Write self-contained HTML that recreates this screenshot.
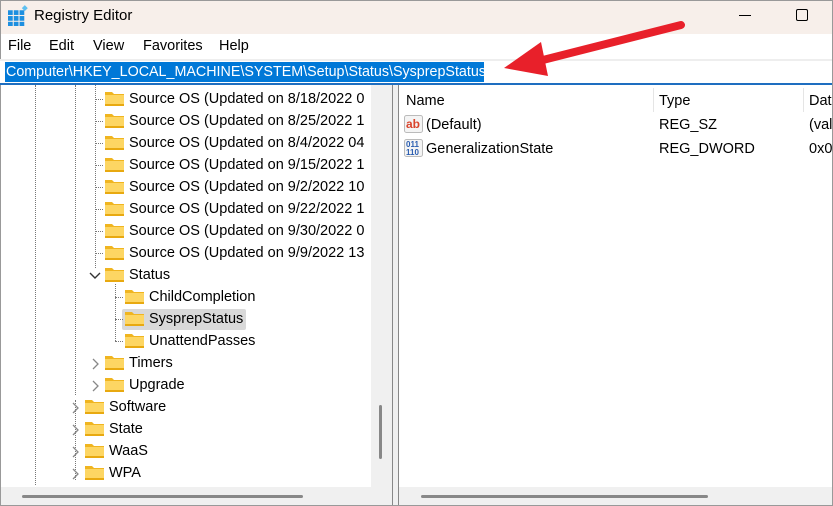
<!DOCTYPE html>
<html><head><style>
*{margin:0;padding:0;box-sizing:border-box}
body{width:833px;height:506px;overflow:hidden;background:#fff;font-family:"Liberation Sans",sans-serif;font-size:14.5px;color:#000;position:relative}
.a{position:absolute}
.t{position:absolute;white-space:nowrap;line-height:22px}
.fold{position:absolute;width:19px;height:15px}
.dv{position:absolute;border-left:1px dotted #777;width:0}
.dh{position:absolute;border-top:1px dotted #777;height:0}
</style></head><body>
<!-- title -->
<div class="a" style="left:0;top:0;width:833px;height:34px;background:#f7efea;border:1px solid #999;border-bottom:none"></div>
<svg class="a" style="left:8px;top:5px" width="21" height="21" viewBox="0 0 20 20">
<g fill="#1d8fe0"><rect x="0" y="5" width="4.5" height="4.5"/><rect x="5.5" y="5" width="4.5" height="4.5"/><rect x="11" y="5" width="4.5" height="4.5"/><rect x="0" y="10.5" width="4.5" height="4.5"/><rect x="5.5" y="10.5" width="4.5" height="4.5"/><rect x="11" y="10.5" width="4.5" height="4.5"/><rect x="0" y="16" width="4.5" height="4"/><rect x="5.5" y="16" width="4.5" height="4"/><rect x="11" y="16" width="4.5" height="4"/></g>
<rect x="14" y="1" width="4" height="4" fill="#5ec0f0" transform="rotate(45 16 3)"/></svg>
<div class="t" style="left:34px;top:5px;font-size:15px">Registry Editor</div>
<div class="a" style="left:739px;top:15px;width:12px;height:1px;background:#000"></div>
<div class="a" style="left:796px;top:9px;width:12px;height:12px;border:1px solid #000;border-radius:2px"></div>
<!-- menu -->
<div class="a" style="left:0;top:34px;width:833px;height:25px;background:#fff;border-left:1px solid #999;border-right:1px solid #999"></div>
<div class="t" style="left:8px;top:35px">File</div>
<div class="t" style="left:49px;top:35px">Edit</div>
<div class="t" style="left:93px;top:35px">View</div>
<div class="t" style="left:143px;top:35px">Favorites</div>
<div class="t" style="left:219px;top:35px">Help</div>
<!-- address -->
<div class="a" style="left:0;top:59px;width:833px;height:2px;background:#eee"></div>
<div class="a" style="left:5px;top:62px;width:479px;height:20px;background:#0078d7"></div>
<div class="t" style="left:6px;top:61px;color:#fff;font-size:14.3px">Computer\HKEY_LOCAL_MACHINE\SYSTEM\Setup\Status\SysprepStatus</div>
<div class="a" style="left:0;top:83px;width:833px;height:2px;background:#1e6ec0"></div>
<!-- panes -->
<div class="a" style="left:0;top:85px;width:1px;height:421px;background:#999"></div>
<div class="a" style="left:832px;top:34px;width:1px;height:472px;background:#999"></div>
<div class="a" style="left:0;top:505px;width:833px;height:1px;background:#999"></div>
<div class="a" style="left:371px;top:85px;width:21px;height:420px;background:#f0f0f0"></div>
<div class="a" style="left:1px;top:487px;width:391px;height:18px;background:#f0f0f0"></div>
<div class="a" style="left:379px;top:405px;width:3px;height:54px;background:#888;border-radius:2px"></div>
<div class="a" style="left:22px;top:495px;width:281px;height:3px;background:#888;border-radius:2px"></div>
<div class="a" style="left:392px;top:85px;width:1px;height:420px;background:#888"></div>
<div class="a" style="left:398px;top:85px;width:1px;height:420px;background:#888"></div>
<div class="a" style="left:393px;top:85px;width:5px;height:420px;background:#f0f0f0"></div>
<div class="a" style="left:399px;top:487px;width:433px;height:18px;background:#f0f0f0"></div>
<div class="a" style="left:421px;top:495px;width:287px;height:3px;background:#888;border-radius:2px"></div>
<!-- tree lines -->
<div class="dv" style="left:35px;top:85px;height:400px"></div>
<div class="dv" style="left:75px;top:85px;height:310px"></div>
<div class="dv" style="left:95px;top:85px;height:183px"></div>
<div class="dv" style="left:115px;top:284px;height:57px"></div>
<div class="dv" style="left:75px;top:400px;height:80px"></div>
<div id="tree"></div>
<!-- right headers -->
<div class="t" style="left:406px;top:90px">Name</div>
<div class="a" style="left:653px;top:88px;width:1px;height:24px;background:#e5e5e5"></div>
<div class="t" style="left:659px;top:90px">Type</div>
<div class="a" style="left:803px;top:88px;width:1px;height:24px;background:#e5e5e5"></div>
<div class="t" style="left:809px;top:90px">Data</div>
<div class="a" style="left:832px;top:85px;width:1px;height:420px;background:#999"></div>
<svg class="a" style="left:404px;top:115px" width="20" height="19"><rect x="0.5" y="0.5" width="18" height="17" rx="2" fill="#f4f4f4" stroke="#bbb"/><text x="2" y="13" font-family="Liberation Sans" font-weight="bold" font-size="12" fill="#d9442c">ab</text></svg>
<div class="t" style="left:426px;top:114px">(Default)</div>
<div class="t" style="left:659px;top:114px">REG_SZ</div>
<div class="t" style="left:809px;top:114px">(val</div>
<svg class="a" style="left:404px;top:139px" width="20" height="19"><rect x="0.5" y="0.5" width="18" height="17" rx="2" fill="#f4f4f4" stroke="#bbb"/><text x="2" y="8" font-family="Liberation Sans" font-weight="bold" font-size="8" fill="#2a5db0">011</text><text x="2" y="16" font-family="Liberation Sans" font-weight="bold" font-size="8" fill="#2a5db0">110</text></svg>
<div class="t" style="left:426px;top:138px">GeneralizationState</div>
<div class="t" style="left:659px;top:138px">REG_DWORD</div>
<div class="t" style="left:809px;top:138px">0x0</div>
<!-- arrow -->
<svg class="a" style="left:0;top:0" width="833" height="506">
<line x1="681" y1="25" x2="535" y2="62" stroke="#e8202a" stroke-width="8" stroke-linecap="round"/>
<polygon points="504,68 541,42 548,76" fill="#e8202a"/></svg>
<script>
var rows=[
[104,"Source OS (Updated on 8/18/2022 0"],[104,"Source OS (Updated on 8/25/2022 1"],[104,"Source OS (Updated on 8/4/2022 04"],
[104,"Source OS (Updated on 9/15/2022 1"],[104,"Source OS (Updated on 9/2/2022 10"],[104,"Source OS (Updated on 9/22/2022 1"],
[104,"Source OS (Updated on 9/30/2022 0"],[104,"Source OS (Updated on 9/9/2022 13"],[104,"Status","v"],
[124,"ChildCompletion"],[124,"SysprepStatus","","sel"],[124,"UnattendPasses"],[104,"Timers",">"],[104,"Upgrade",">"],
[84,"Software",">"],[84,"State",">"],[84,"WaaS",">"],[84,"WPA",">"]];
var h="";
rows.forEach(function(r,i){var y=88+i*22,x=r[0];
if(r[3])h+='<div class="a" style="left:'+(x-2)+'px;top:'+(y+1)+'px;width:124px;height:21px;background:#d9d9d9;border-radius:2px"></div>';
if(!r[2])h+='<div class="dh" style="left:'+(x-9)+'px;top:'+(y+11)+'px;width:8px"></div>';
if(r[2]==">")h+='<svg class="a" style="left:'+(x-13)+'px;top:'+(y+6)+'px" width="10" height="12"><path d="M2 1L7 6L2 11" fill="none" stroke="#888" stroke-width="1.3"/></svg>';
if(r[2]=="v")h+='<svg class="a" style="left:'+(x-15)+'px;top:'+(y+7)+'px" width="12" height="10"><path d="M1 2L6 7L11 2" fill="none" stroke="#333" stroke-width="1.4"/></svg>';
h+='<svg class="fold" style="left:'+(x+1)+'px;top:'+(y+3)+'px" viewBox="0 0 19 15"><path d="M0 1h7l2 2h10v12H0z" fill="#f0b520"/><rect x="0" y="4" width="19" height="11" fill="#fdd663"/><rect x="0" y="13" width="19" height="2" fill="#e8a910"/></svg>';
h+='<div class="t" style="left:'+(x+25)+'px;top:'+y+'px;width:'+(371-x-25)+'px;overflow:hidden">'+r[1]+'</div>';});
document.getElementById("tree").innerHTML=h;
</script>
</body></html>
